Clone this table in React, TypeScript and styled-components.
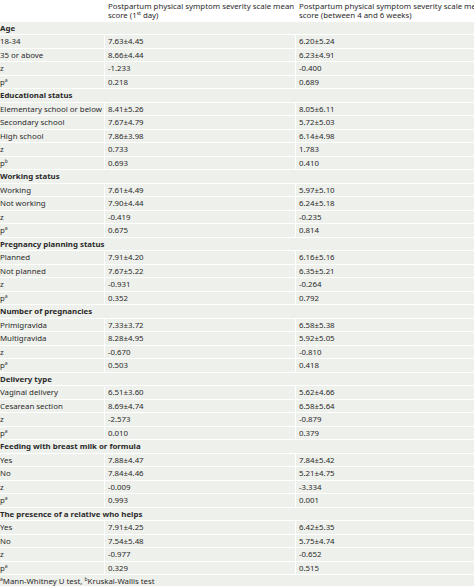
import React from 'react';
import styled, { createGlobalStyle } from 'styled-components';

const GlobalStyle = createGlobalStyle`
  html, body {
    margin: 0;
    padding: 0;
    background: #ffffff;
  }
  body {
    font-family: "Noto Sans", "Open Sans", sans-serif;
    color: #2a2a2a;
  }
`;

const Table = styled.div`
  display: grid;
  grid-template-columns: 104px 190px 1fr;
  column-gap: 1px;
  row-gap: 1px;
  width: 474px;
  overflow: hidden;
  font-size: 7.85px;
`;

const HeadCell = styled.div`
  background: #ffffff;
  height: 20.5px;
  padding: 1.5px 0 0 3px;
  line-height: 9.6px;
  box-sizing: border-box;
  white-space: nowrap;
`;

const Cell = styled.div<{ $first?: boolean }>`
  background: #eef0ec;
  height: 12.5px;
  line-height: 12.5px;
  padding-left: ${p => (p.$first ? '0' : '3px')};
  white-space: nowrap;
  overflow: hidden;
`;

const SectionCell = styled.div`
  grid-column: 1 / -1;
  background: #eef0ec;
  height: 12.5px;
  line-height: 12.5px;
  font-weight: 700;
  white-space: nowrap;
`;

const Note = styled.div`
  grid-column: 1 / -1;
  background: #eef0ec;
  height: 12.5px;
  line-height: 12.5px;
  white-space: nowrap;
`;

const Sup = styled.sup`
  font-size: 5px;
  line-height: 0;
  vertical-align: 3px;
`;

type Row = [React.ReactNode, string, string];

const p = (mark: string) => (
  <>
    p<Sup>{mark}</Sup>
  </>
);

const sections: { title: string; rows: Row[] }[] = [
  {
    title: 'Age',
    rows: [
      ['18-34', '7.63±4.45', '6.20±5.24'],
      ['35 or above', '8.66±4.44', '6.23±4.91'],
      ['z', '-1.233', '-0.400'],
      [p('a'), '0.218', '0.689'],
    ],
  },
  {
    title: 'Educational status',
    rows: [
      ['Elementary school or below', '8.41±5.26', '8.05±6.11'],
      ['Secondary school', '7.67±4.79', '5.72±5.03'],
      ['High school', '7.86±3.98', '6.14±4.98'],
      ['z', '0.733', '1.783'],
      [p('b'), '0.693', '0.410'],
    ],
  },
  {
    title: 'Working status',
    rows: [
      ['Working', '7.61±4.49', '5.97±5.10'],
      ['Not working', '7.90±4.44', '6.24±5.18'],
      ['z', '-0.419', '-0.235'],
      [p('a'), '0.675', '0.814'],
    ],
  },
  {
    title: 'Pregnancy planning status',
    rows: [
      ['Planned', '7.91±4.20', '6.16±5.16'],
      ['Not planned', '7.67±5.22', '6.35±5.21'],
      ['z', '-0.931', '-0.264'],
      [p('a'), '0.352', '0.792'],
    ],
  },
  {
    title: 'Number of pregnancies',
    rows: [
      ['Primigravida', '7.33±3.72', '6.58±5.38'],
      ['Multigravida', '8.28±4.95', '5.92±5.05'],
      ['z', '-0.670', '-0.810'],
      [p('a'), '0.503', '0.418'],
    ],
  },
  {
    title: 'Delivery type',
    rows: [
      ['Vaginal delivery', '6.51±3.60', '5.62±4.66'],
      ['Cesarean section', '8.69±4.74', '6.58±5.64'],
      ['z', '-2.573', '-0.879'],
      [p('a'), '0.010', '0.379'],
    ],
  },
  {
    title: 'Feeding with breast milk or formula',
    rows: [
      ['Yes', '7.88±4.47', '7.84±5.42'],
      ['No', '7.84±4.46', '5.21±4.75'],
      ['z', '-0.009', '-3.334'],
      [p('a'), '0.993', '0.001'],
    ],
  },
  {
    title: 'The presence of a relative who helps',
    rows: [
      ['Yes', '7.91±4.25', '6.42±5.35'],
      ['No', '7.54±5.48', '5.75±4.74'],
      ['z', '-0.977', '-0.652'],
      [p('a'), '0.329', '0.515'],
    ],
  },
];

export default function App() {
  return (
    <>
      <GlobalStyle />
      <Table>
        <HeadCell />
        <HeadCell>
          Postpartum physical symptom severity scale mean
          <br />
          score (1<Sup>st</Sup> day)
        </HeadCell>
        <HeadCell>
          Postpartum physical symptom severity scale mean
          <br />
          score (between 4 and 6 weeks)
        </HeadCell>
        {sections.map(section => (
          <React.Fragment key={section.title}>
            <SectionCell>{section.title}</SectionCell>
            {section.rows.map((row, i) => (
              <React.Fragment key={i}>
                <Cell $first>{row[0]}</Cell>
                <Cell>{row[1]}</Cell>
                <Cell>{row[2]}</Cell>
              </React.Fragment>
            ))}
          </React.Fragment>
        ))}
        <Note>
          <Sup>a</Sup>Mann-Whitney U test, <Sup>b</Sup>Kruskal-Wallis test
        </Note>
      </Table>
    </>
  );
}
